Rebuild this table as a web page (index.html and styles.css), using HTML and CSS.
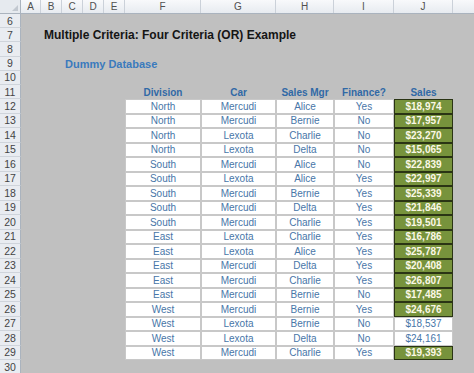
FILE: index.html
```html
<!DOCTYPE html>
<html>
<head>
<meta charset="utf-8">
<link rel="stylesheet" href="styles.css">
</head>
<body>
<div class="sheet">
  <div class="row colhead">
    <div class="corner"><span class="tri"></span></div>
    <div>A</div><div>B</div><div>C</div><div>D</div><div>E</div><div>F</div><div>G</div><div>H</div><div>I</div><div>J</div><div class="last"></div>
  </div>
  <div class="row top"><div class="rh">6</div></div>
  <div class="row top"><div class="rh">7</div><div class="title">Multiple Criteria: Four Criteria (OR) Example</div></div>
  <div class="row top"><div class="rh">8</div></div>
  <div class="row top"><div class="rh">9</div><div class="sub">Dummy Database</div></div>
  <div class="row top"><div class="rh">10</div></div>
  <div class="row top"><div class="rh">11</div><div class="th f">Division</div><div class="th">Car</div><div class="th">Sales Mgr</div><div class="th">Finance?</div><div class="th">Sales</div></div>
  <div class="row"><div class="rh">12</div><div class="td f">North</div><div class="td">Mercudi</div><div class="td">Alice</div><div class="td">Yes</div><div class="td g">$18,974</div></div>
  <div class="row"><div class="rh">13</div><div class="td f">North</div><div class="td">Mercudi</div><div class="td">Bernie</div><div class="td">No</div><div class="td g">$17,957</div></div>
  <div class="row"><div class="rh">14</div><div class="td f">North</div><div class="td">Lexota</div><div class="td">Charlie</div><div class="td">No</div><div class="td g">$23,270</div></div>
  <div class="row"><div class="rh">15</div><div class="td f">North</div><div class="td">Lexota</div><div class="td">Delta</div><div class="td">No</div><div class="td g">$15,065</div></div>
  <div class="row"><div class="rh">16</div><div class="td f">South</div><div class="td">Mercudi</div><div class="td">Alice</div><div class="td">No</div><div class="td g">$22,839</div></div>
  <div class="row"><div class="rh">17</div><div class="td f">South</div><div class="td">Lexota</div><div class="td">Alice</div><div class="td">Yes</div><div class="td g">$22,997</div></div>
  <div class="row"><div class="rh">18</div><div class="td f">South</div><div class="td">Mercudi</div><div class="td">Bernie</div><div class="td">Yes</div><div class="td g">$25,339</div></div>
  <div class="row"><div class="rh">19</div><div class="td f">South</div><div class="td">Mercudi</div><div class="td">Delta</div><div class="td">Yes</div><div class="td g">$21,846</div></div>
  <div class="row"><div class="rh">20</div><div class="td f">South</div><div class="td">Mercudi</div><div class="td">Charlie</div><div class="td">Yes</div><div class="td g">$19,501</div></div>
  <div class="row"><div class="rh">21</div><div class="td f">East</div><div class="td">Lexota</div><div class="td">Charlie</div><div class="td">Yes</div><div class="td g">$16,786</div></div>
  <div class="row"><div class="rh">22</div><div class="td f">East</div><div class="td">Lexota</div><div class="td">Alice</div><div class="td">Yes</div><div class="td g">$25,787</div></div>
  <div class="row"><div class="rh">23</div><div class="td f">East</div><div class="td">Mercudi</div><div class="td">Delta</div><div class="td">Yes</div><div class="td g">$20,408</div></div>
  <div class="row"><div class="rh">24</div><div class="td f">East</div><div class="td">Mercudi</div><div class="td">Charlie</div><div class="td">Yes</div><div class="td g">$26,807</div></div>
  <div class="row"><div class="rh">25</div><div class="td f">East</div><div class="td">Mercudi</div><div class="td">Bernie</div><div class="td">No</div><div class="td g">$17,485</div></div>
  <div class="row"><div class="rh">26</div><div class="td f">West</div><div class="td">Mercudi</div><div class="td">Bernie</div><div class="td">Yes</div><div class="td g">$24,676</div></div>
  <div class="row"><div class="rh">27</div><div class="td f">West</div><div class="td">Lexota</div><div class="td">Bernie</div><div class="td">No</div><div class="td">$18,537</div></div>
  <div class="row"><div class="rh">28</div><div class="td f">West</div><div class="td">Lexota</div><div class="td">Delta</div><div class="td">No</div><div class="td">$24,161</div></div>
  <div class="row"><div class="rh">29</div><div class="td f">West</div><div class="td">Mercudi</div><div class="td">Charlie</div><div class="td">Yes</div><div class="td g">$19,393</div></div>
  <div class="row"><div class="rh">30</div></div>
</div>
</body>
</html>
```

FILE: styles.css
```css
* { box-sizing: border-box; margin: 0; padding: 0; }
html, body { background: #c0c0c0; }
body {
  margin: 0;
  width: 474px;
  height: 373px;
  overflow: hidden;
  font-family: "Liberation Sans", Arial, sans-serif;
}
.sheet { display: flex; flex-direction: column; }
.row {
  display: grid;
  grid-template-columns: 21px 20px 21px 21px 21px 21px 76px 75px 58px 60px 59px 21px;
  height: 14.5px;
  flex: none;
}
.row.top { height: 14.2px; }

.colhead {
  height: 14px;
  background: linear-gradient(#f8f9fb, #e7ebf0);
  border-bottom: 1px solid #aab3be;
}
.colhead > div {
  border-right: 1px solid #cbd1d9;
  font-size: 10px;
  color: #505050;
  display: flex;
  align-items: center;
  justify-content: center;
}
.colhead > .last { border-right: none; }
.colhead > .corner {
  background: #e6eaef;
  border-right: 1px solid #aab3be;
  align-items: flex-end;
  justify-content: flex-end;
  padding: 0 2px 2px 0;
}
.tri {
  width: 0;
  height: 0;
  border-left: 6px solid transparent;
  border-bottom: 6px solid #c2c8d0;
}

.rh {
  grid-column: 1;
  background: #e9ecf1;
  border-right: 1px solid #aab3be;
  border-bottom: 1px solid #cfd4db;
  font-size: 10.5px;
  color: #444;
  display: flex;
  align-items: center;
  justify-content: center;
}

.title {
  grid-column: 3 / -1;
  padding-left: 3px;
  white-space: nowrap;
  font-size: 12px;
  font-weight: bold;
  color: #151515;
  display: flex;
  align-items: center;
}
.sub {
  grid-column: 4 / -1;
  padding-left: 3px;
  white-space: nowrap;
  font-size: 11px;
  font-weight: bold;
  color: #3a7abd;
  display: flex;
  align-items: center;
}

.f { grid-column: 7; }
.th, .td {
  display: flex;
  align-items: center;
  justify-content: center;
  font-size: 10px;
  white-space: nowrap;
}
.th {
  font-weight: bold;
  color: #3069a6;
}
.td {
  background: #ffffff;
  box-shadow: inset 0 0 0 1px #c8c8c8;
  color: #4876a8;
}
.td.g {
  background: #77933c;
  box-shadow: inset 0 0 0 1px #2a3414;
  color: #fbf8e6;
  font-weight: bold;
}
```
